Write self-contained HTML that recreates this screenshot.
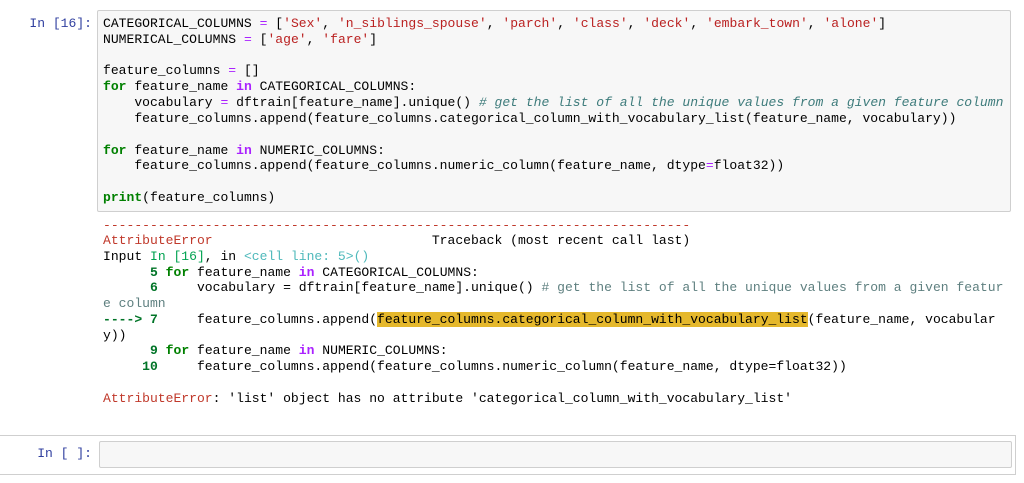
<!DOCTYPE html>
<html><head><meta charset="utf-8"><style>
body{margin:0;width:1024px;height:483px;background:#fff;overflow:hidden;position:relative;font-family:"Liberation Mono",monospace;}
pre{margin:0;font-family:"Liberation Mono",monospace;font-size:13.05px;line-height:15.82px;position:absolute;color:#000;white-space:pre;}
.prompt{position:absolute;color:#303F9F;font-family:"Liberation Mono",monospace;font-size:13.05px;line-height:15.8px;text-align:right;width:92px;left:0;}
.box{position:absolute;left:97px;top:10px;width:912px;height:200px;background:#f7f7f7;border:1px solid #cfcfcf;border-radius:2px;}
.k{color:#008000;font-weight:bold}.o{color:#AA22FF;font-weight:bold}.s{color:#BA2121}.c{color:#3D7B7B;font-style:italic}.p{color:#AA22FF}
.r{color:#c0392b}.g{color:#007427;font-weight:bold}.gn{color:#00a250}.cy{color:#4fb9bb}.gc{color:#5f8080}.hl{background:#e5b82c}.mk{color:#AA22FF;font-weight:bold}
.cell2{position:absolute;left:0;top:435px;width:1015px;height:38px;border:1px solid #cfcfcf;border-left:none;}
.box2{position:absolute;left:99px;top:441px;width:911px;height:25px;background:#f7f7f7;border:1px solid #cfcfcf;border-radius:2px;}
</style></head><body>
<div class="prompt" style="top:16px">In [16]:</div>
<div class="box"></div>
<pre style="left:103px;top:16px">CATEGORICAL_COLUMNS <span class="p">=</span> [<span class="s">'Sex'</span>, <span class="s">'n_siblings_spouse'</span>, <span class="s">'parch'</span>, <span class="s">'class'</span>, <span class="s">'deck'</span>, <span class="s">'embark_town'</span>, <span class="s">'alone'</span>]
NUMERICAL_COLUMNS <span class="p">=</span> [<span class="s">'age'</span>, <span class="s">'fare'</span>]

feature_columns <span class="p">=</span> []
<span class="k">for</span> feature_name <span class="o">in</span> CATEGORICAL_COLUMNS:
    vocabulary <span class="p">=</span> dftrain[feature_name].unique() <span class="c"># get the list of all the unique values from a given feature column</span>
    feature_columns.append(feature_columns.categorical_column_with_vocabulary_list(feature_name, vocabulary))

<span class="k">for</span> feature_name <span class="o">in</span> NUMERIC_COLUMNS:
    feature_columns.append(feature_columns.numeric_column(feature_name, dtype<span class="p">=</span>float32))

<span class="k">print</span>(feature_columns)</pre>
<pre style="left:103px;top:217.5px;line-height:15.73px"><span class="r">---------------------------------------------------------------------------</span>
<span class="r">AttributeError</span>                            Traceback (most recent call last)
Input <span class="gn">In [16]</span>, in <span class="cy">&lt;cell line: 5&gt;()</span>
<span class="g">      5</span> <span class="k">for</span> feature_name <span class="mk">in</span> CATEGORICAL_COLUMNS:
<span class="g">      6</span>     vocabulary = dftrain[feature_name].unique() <span class="gc"># get the list of all the unique values from a given featur</span>
<span class="gc">e column</span>
<span class="g">----&gt; 7</span>     feature_columns.append(<span class="hl">feature_columns.categorical_column_with_vocabulary_list</span>(feature_name, vocabular
y))
<span class="g">      9</span> <span class="k">for</span> feature_name <span class="mk">in</span> NUMERIC_COLUMNS:
<span class="g">     10</span>     feature_columns.append(feature_columns.numeric_column(feature_name, dtype=float32))

<span class="r">AttributeError</span>: 'list' object has no attribute 'categorical_column_with_vocabulary_list'</pre>
<div class="cell2"></div>
<div class="box2"></div>
<div class="prompt" style="top:446px">In [ ]:</div>
</body></html>
